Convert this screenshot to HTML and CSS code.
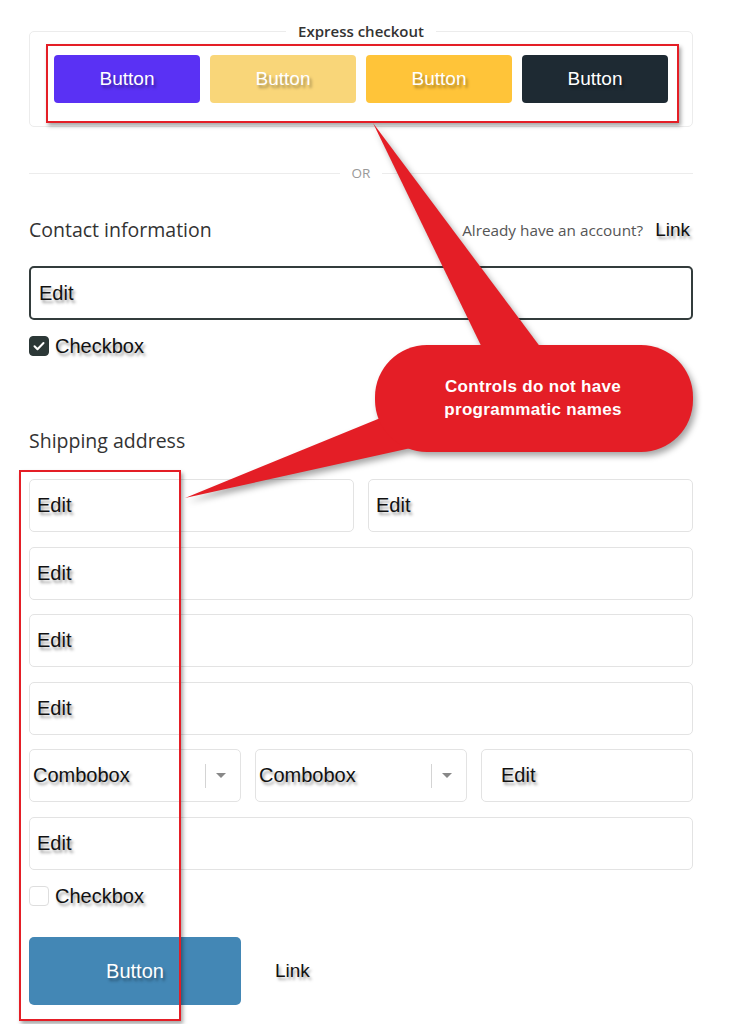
FILE: index.html
```html
<!DOCTYPE html>
<html lang="en">
<head>
<meta charset="utf-8">
<title>Checkout</title>
<link rel="stylesheet" href="styles.css">
</head>
<body>
<div class="page">
  <fieldset class="express">
    <legend class="express-title">Express checkout</legend>
    <div class="express-buttons">
      <button class="pay pay-purple">Button</button>
      <button class="pay pay-light">Button</button>
      <button class="pay pay-yellow">Button</button>
      <button class="pay pay-dark">Button</button>
    </div>
  </fieldset>

  <div class="divider"><span class="rule"></span><span class="or">OR</span><span class="rule"></span></div>

  <div class="section-head contact-head">
    <h2 class="section-title">Contact information</h2>
    <div class="account"><span class="account-q">Already have an account?</span><a class="link" href="#">Link</a></div>
  </div>
  <div class="field field-strong"><span class="ctl">Edit</span></div>
  <label class="check check-contact"><span class="box box-on"><svg viewBox="0 0 20 20" width="20" height="20"><path d="M5.5 10.3l3 3 6-6.3" fill="none" stroke="#fff" stroke-width="2" stroke-linecap="round" stroke-linejoin="round"/></svg></span><span class="ctl">Checkbox</span></label>

  <h2 class="section-title ship-title">Shipping address</h2>
  <div class="rows">
    <div class="row two">
      <div class="field"><span class="ctl">Edit</span></div>
      <div class="field"><span class="ctl">Edit</span></div>
    </div>
    <div class="field"><span class="ctl">Edit</span></div>
    <div class="field"><span class="ctl">Edit</span></div>
    <div class="field"><span class="ctl">Edit</span></div>
    <div class="row three">
      <div class="field combo"><span class="ctl">Combobox</span><span class="combo-ind"><span class="sep"></span><span class="arrow"></span></span></div>
      <div class="field combo"><span class="ctl">Combobox</span><span class="combo-ind"><span class="sep"></span><span class="arrow"></span></span></div>
      <div class="field field-pad"><span class="ctl">Edit</span></div>
    </div>
    <div class="field"><span class="ctl">Edit</span></div>
  </div>
  <label class="check check-ship"><span class="box"></span><span class="ctl">Checkbox</span></label>
  <div class="actions">
    <button class="submit">Button</button>
    <a class="link link-bottom" href="#">Link</a>
  </div>
</div>

<div class="hl hl-top"></div>
<div class="hl hl-left"></div>

<svg class="callout" viewBox="0 0 742 1024" width="742" height="1024">
  <g class="callout-shape" fill="#e41e26">
    <polygon points="373,123 488,360 550,360"/>
    <polygon points="185,498 400,410 420,446"/>
    <rect x="375" y="345" width="318" height="107" rx="52" ry="52"/>
  </g>
  <text class="callout-text" x="533" y="392" text-anchor="middle">Controls do not have</text>
  <text class="callout-text" x="533" y="415" text-anchor="middle">programmatic names</text>
</svg>
</body>
</html>
```

FILE: styles.css
```css
* { box-sizing: border-box; }
html, body { margin: 0; padding: 0; background: #fff; }
body {
  width: 742px;
  height: 1024px;
  position: relative;
  overflow: hidden;
  font-family: "Open Sans", "Noto Sans", sans-serif;
  color: #333;
}
.page {
  padding: 0 49px 0 29px;
  width: 742px;
}
.ctl {
  font-family: "Liberation Sans", Arial, sans-serif;
  font-size: 20px;
  color: #111;
  text-shadow: 2px 3px 3px rgba(0,0,0,0.38);
}

/* express checkout */
.express {
  margin: 21px 0 0 0;
  padding: 0 24px 23px;
  border: 1px solid #ececec;
  border-radius: 5px;
  min-width: 0;
}
.express-title {
  margin: 0 auto;
  padding: 0 12px;
  font-size: 15px;
  line-height: 20px;
  font-weight: 600;
  color: #333;
}
.express-buttons {
  margin-top: 14px;
  display: grid;
  grid-template-columns: repeat(4, 1fr);
  gap: 10px;
}
.pay {
  height: 48px;
  border: 0;
  border-radius: 4px;
  font-family: "Liberation Sans", Arial, sans-serif;
  font-size: 19px;
  color: #fff;
  text-shadow: 2px 3px 3px rgba(0,0,0,0.35);
  padding: 0;
}
.pay-purple { background: #5a31f4; }
.pay-light { background: #f9d679; }
.pay-yellow { background: #ffc439; }
.pay-dark { background: #1e2a33; }

/* divider */
.divider {
  margin-top: 38px;
  display: flex;
  align-items: center;
  gap: 12px;
  height: 16px;
}
.rule { flex: 1; height: 1px; background: #ececec; }
.or { font-size: 13.5px; color: #999; line-height: 16px; }

/* section heads */
.section-head {
  display: flex;
  justify-content: space-between;
  align-items: center;
}
.contact-head { margin-top: 36px; height: 26px; }
.section-title {
  margin: 0;
  font-size: 19.5px;
  line-height: 26px;
  font-weight: 400;
  color: #333;
}
.account { display: flex; align-items: center; gap: 12px; padding-right: 3px; }
.account-q { font-size: 15.3px; color: #555; }
.link {
  font-family: "Liberation Sans", Arial, sans-serif;
  font-size: 19px;
  color: #111;
  text-decoration: none;
  text-shadow: 2px 3px 3px rgba(0,0,0,0.35);
}

/* fields */
.field {
  height: 53px;
  border: 1px solid #e3e3e3;
  border-radius: 5px;
  display: flex;
  align-items: center;
  padding: 0 7px;
  background: #fff;
}
.field-strong {
  margin-top: 23px;
  height: 54px;
  border: 2px solid #333c3c;
  padding: 0 8px;
}
.field-pad { padding-left: 19px; }
.check {
  display: flex;
  align-items: center;
  gap: 6px;
  height: 20px;
}
.check-contact { margin-top: 16px; }
.box {
  width: 20px;
  height: 20px;
  border-radius: 4px;
  border: 1px solid #dedede;
  background: #fff;
  display: block;
}
.box-on { background: #2c3837; border-color: #2c3837; }
.box-on svg { display: block; margin: -1px; }

.ship-title { margin-top: 72px; }
.rows {
  margin-top: 25px;
  display: flex;
  flex-direction: column;
  gap: 14.5px;
}
.row { display: grid; gap: 14px; }
.two { grid-template-columns: 1fr 1fr; }
.three { grid-template-columns: 1fr 1fr 1fr; }
.combo { padding: 0 0 0 3px; justify-content: space-between; }
.combo-ind {
  display: flex;
  align-items: center;
  width: 35px;
  height: 24px;
}
.sep { width: 1px; height: 24px; background: #d4d4d4; }
.arrow {
  margin-left: 10px;
  width: 0;
  height: 0;
  border-left: 5px solid transparent;
  border-right: 5px solid transparent;
  border-top: 5px solid #888;
}

.check-ship { margin-top: 16.5px; }
.actions {
  margin-top: 31px;
  display: flex;
  align-items: center;
  gap: 34px;
}
.submit {
  width: 212px;
  height: 68px;
  border: 0;
  border-radius: 5px;
  background: #4387b5;
  color: #fff;
  font-family: "Liberation Sans", Arial, sans-serif;
  font-size: 20px;
  text-shadow: 2px 3px 3px rgba(0,0,0,0.35);
  padding: 0;
}

/* annotation overlays */
.hl {
  position: absolute;
  border: 2px solid #e41e26;
  box-shadow: 2px 3px 4px rgba(0,0,0,0.35);
  pointer-events: none;
}
.hl-top { left: 46px; top: 44px; width: 633px; height: 79px; }
.hl-left { left: 19px; top: 470px; width: 162px; height: 551px; }
.callout {
  position: absolute;
  left: 0;
  top: 0;
  pointer-events: none;
}
.callout-shape { filter: drop-shadow(3px 4px 3px rgba(0,0,0,0.35)); }
.callout-text {
  font-family: "Liberation Sans", Arial, sans-serif;
  font-weight: 700;
  font-size: 17px;
  fill: #fff;
  letter-spacing: 0.3px;
}
```
